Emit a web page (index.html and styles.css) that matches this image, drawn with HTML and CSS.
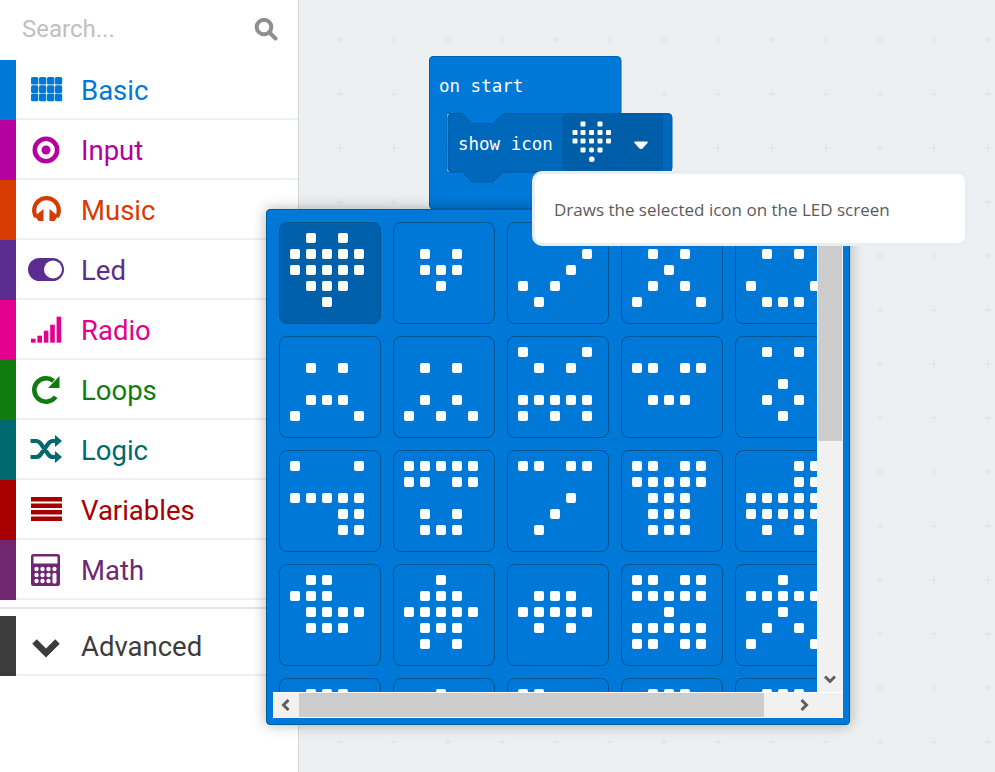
FILE: index.html
```html
<!DOCTYPE html>
<html lang="en">
<head>
    <meta charset="UTF-8">
    <meta name="viewport" content="width=device-width, initial-scale=1.0">
    <title>Show icon</title>
    <link rel="stylesheet" href="styles.css">
</head>
<body>
    <div class="app">
        <aside class="toolbox">
            <div class="search">
                <input class="search-input" type="text" placeholder="Search...">
                <svg class="search-icon" viewBox="0 0 24 24"><circle cx="10" cy="10" r="7.3"/><path d="M15.5 15.5L21.5 21.5"/></svg>
            </div>
            <div class="cat basic">
                <span class="cat-bar"></span>
                <div class="cat-body">
                    <svg class="cat-icon" viewBox="0 0 36 36"><rect x="3" y="6" width="7.3" height="7.6" rx="1.5"/><rect x="11" y="6" width="7.3" height="7.6" rx="1.5"/><rect x="19" y="6" width="7.3" height="7.6" rx="1.5"/><rect x="26.9" y="6" width="7.3" height="7.6" rx="1.5"/><rect x="3" y="14.3" width="7.3" height="7.6" rx="1.5"/><rect x="11" y="14.3" width="7.3" height="7.6" rx="1.5"/><rect x="19" y="14.3" width="7.3" height="7.6" rx="1.5"/><rect x="26.9" y="14.3" width="7.3" height="7.6" rx="1.5"/><rect x="3" y="22.6" width="7.3" height="7.6" rx="1.5"/><rect x="11" y="22.6" width="7.3" height="7.6" rx="1.5"/><rect x="19" y="22.6" width="7.3" height="7.6" rx="1.5"/><rect x="26.9" y="22.6" width="7.3" height="7.6" rx="1.5"/></svg>
                    <span class="cat-name">Basic</span>
                </div>
            </div>
            <div class="cat input">
                <span class="cat-bar"></span>
                <div class="cat-body">
                    <svg class="cat-icon" viewBox="0 0 36 36"><circle class="line" cx="18" cy="19" r="11.2" stroke-width="4.6"/><circle cx="18" cy="19" r="4.5"/></svg>
                    <span class="cat-name">Input</span>
                </div>
            </div>
            <div class="cat music">
                <span class="cat-bar"></span>
                <div class="cat-body">
                    <svg class="cat-icon" viewBox="0 0 36 36"><path class="line" stroke-width="4.2" d="M8.1 26A12.3 12.3 0 1 1 28.9 26"/><path d="M15.5 18V30H10.5L7 25ZM21.5 18V30H26.5L30 25Z"/></svg>
                    <span class="cat-name">Music</span>
                </div>
            </div>
            <div class="cat led">
                <span class="cat-bar"></span>
                <div class="cat-body">
                    <svg class="cat-icon" viewBox="0 0 36 36"><rect x="0" y="7" width="36" height="23" rx="11.5"/><circle class="knob" cx="25" cy="18.5" r="9"/></svg>
                    <span class="cat-name">Led</span>
                </div>
            </div>
            <div class="cat radio">
                <span class="cat-bar"></span>
                <div class="cat-body">
                    <svg class="cat-icon" viewBox="0 0 36 36"><rect x="3" y="27.7" width="4.6" height="4"/><rect x="9.4" y="24.7" width="4.6" height="7"/><rect x="15.8" y="19.7" width="4.6" height="12"/><rect x="22.2" y="13.7" width="4.6" height="18"/><rect x="28.6" y="5.7" width="4.6" height="26"/></svg>
                    <span class="cat-name">Radio</span>
                </div>
            </div>
            <div class="cat loops">
                <span class="cat-bar"></span>
                <div class="cat-body">
                    <svg class="cat-icon" viewBox="0 0 36 36"><path class="line" stroke-width="4.6" d="M27.6 25.7A11.7 11.7 0 1 1 25.5 10"/><path d="M31.5 5V17H20Z"/></svg>
                    <span class="cat-name">Loops</span>
                </div>
            </div>
            <div class="cat logic">
                <span class="cat-bar"></span>
                <div class="cat-body">
                    <svg class="cat-icon" viewBox="0 0 36 36"><path class="line" stroke-width="4.2" d="M2.5 10H8Q11 10 13 13L20 23Q22 26 25 26H28M2.5 26H8Q11 26 13 23L20 13Q22 10 25 10H28"/><path d="M27 4L34 10L27 16ZM27 20L34 26L27 32Z"/></svg>
                    <span class="cat-name">Logic</span>
                </div>
            </div>
            <div class="cat variables">
                <span class="cat-bar"></span>
                <div class="cat-body">
                    <svg class="cat-icon" viewBox="0 0 36 36"><rect x="3" y="6" width="31" height="4.5"/><rect x="3" y="12.5" width="31" height="4.5"/><rect x="3" y="19" width="31" height="4.5"/><rect x="3" y="25.5" width="31" height="4.5"/></svg>
                    <span class="cat-name">Variables</span>
                </div>
            </div>
            <div class="cat math">
                <span class="cat-bar"></span>
                <div class="cat-body">
                    <svg class="cat-icon" viewBox="0 0 36 36"><rect x="3" y="3" width="29" height="32" rx="2.5"/><g class="knob"><rect x="5.5" y="5.5" width="24" height="7"/><circle cx="8.5" cy="18" r="2.2"/><circle cx="14.5" cy="18" r="2.2"/><circle cx="20.5" cy="18" r="2.2"/><circle cx="26.5" cy="18" r="2.2"/><circle cx="8.5" cy="24" r="2.2"/><circle cx="14.5" cy="24" r="2.2"/><circle cx="20.5" cy="24" r="2.2"/><circle cx="8.5" cy="30" r="2.2"/><circle cx="14.5" cy="30" r="2.2"/><circle cx="20.5" cy="30" r="2.2"/><rect x="24.5" y="22" width="4" height="10.5" rx="1.5"/></g></svg>
                    <span class="cat-name">Math</span>
                </div>
            </div>
            <div class="sep"></div>
            <div class="cat advanced">
                <span class="cat-bar"></span>
                <div class="cat-body">
                    <svg class="cat-icon" viewBox="0 0 36 36"><path class="line" stroke-width="6.4" d="M6.5 14.5L18 26L29.5 14.5"/></svg>
                    <span class="cat-name">Advanced</span>
                </div>
            </div>
        </aside>

        <main class="workspace">
            <svg class="canvas" viewBox="299 0 696 772">
                <defs>
                    <pattern id="plus" x="313" y="13" width="54" height="54" patternUnits="userSpaceOnUse">
                        <path d="M23 27H31M27 23V31" stroke="#dfe3e5" stroke-width="1" fill="none"/>
                    </pattern>
                </defs>
                <rect x="299" y="0" width="696" height="772" fill="url(#plus)"/>

                <path class="hat" d="M433 56.5H617Q621 56.5 621 60.5V113.5H503L493 123.5H472L462 113.5H447V172H621V209H433Q429.5 209 429.5 205V60Q429.5 56.5 433 56.5Z"/>
                <text class="block-text" x="439" y="92">on start</text>

                <path class="stmt" d="M452 113.5H462L472 123.5H493L503 113.5H668Q672 113.5 672 117.5V168Q672 172 668 172H503L493 182H472L462 172H452Q448 172 448 168V117.5Q448 113.5 452 113.5Z"/>
                <text class="block-text" x="458" y="150">show icon</text>
                <rect class="field" x="562" y="114" width="101" height="57" rx="4"/>
                <g class="mini">
                    <rect x="580.5" y="121.5" width="5" height="5" rx="1"/><rect x="597.5" y="121.5" width="5" height="5" rx="1"/>
                    <rect x="572.5" y="130" width="5" height="5" rx="1"/><rect x="580.5" y="130" width="5" height="5" rx="1"/><rect x="589" y="130" width="5" height="5" rx="1"/><rect x="597.5" y="130" width="5" height="5" rx="1"/><rect x="606" y="130" width="5" height="5" rx="1"/>
                    <rect x="572.5" y="138.5" width="5" height="5" rx="1"/><rect x="580.5" y="138.5" width="5" height="5" rx="1"/><rect x="589" y="138.5" width="5" height="5" rx="1"/><rect x="597.5" y="138.5" width="5" height="5" rx="1"/><rect x="606" y="138.5" width="5" height="5" rx="1"/>
                    <rect x="580.5" y="147.5" width="5" height="5" rx="1"/><rect x="589" y="147.5" width="5" height="5" rx="2"/><rect x="597.5" y="147.5" width="5" height="5" rx="1"/>
                    <rect x="589" y="156.5" width="5.5" height="5.5" rx="2.5"/>
                    <path d="M635 141.5H647Q648.5 141.5 647.5 143L642.5 148.5Q641 149.5 639.5 148.5L634.5 143Q633.5 141.5 635 141.5Z"/>
                </g>
            </svg>
        </main>

        <div class="picker">
            <div class="picker-scroll">
                <div class="picker-grid" id="pickerGrid"></div>
            </div>
            <div class="bar bar-v">
                <span class="bar-btn"></span>
                <span class="thumb thumb-v"></span>
                <span class="bar-space"></span>
                <span class="bar-btn"><svg class="chev" viewBox="0 0 12 12"><path d="M1 3.5L6 8.5L11 3.5"/></svg></span>
            </div>
            <div class="bar bar-h">
                <span class="bar-btn"><svg class="chev" viewBox="0 0 12 12"><path d="M8.5 1L3.5 6L8.5 11"/></svg></span>
                <span class="thumb thumb-h"></span>
                <span class="bar-space"></span>
                <span class="bar-btn"><svg class="chev" viewBox="0 0 12 12"><path d="M3.5 1L8.5 6L3.5 11"/></svg></span>
            </div>
            <div class="bar-corner"></div>
        </div>

        <div class="tooltip">Draws the selected icon on the LED screen</div>
    </div>
    <script>
        const icons = [
            '.#.#./#####/#####/.###./..#..',
            '...../.#.#./.###./..#../.....',
            '...../....#/...#./#.#../.#...',
            '#...#/.#.#./..#../.#.#./#...#',
            '...../.#.#./...../#...#/.###.',
            '...../.#.#./...../.###./#...#',
            '...../.#.#./...../.#.#./#.#.#',
            '#...#/.#.#./...../#####/#.#.#',
            '...../##.##/...../.###./.....',
            '.#.#./...../..#../.#.#./..#..',
            '#...#/...../#####/...##/...##',
            '#####/##.##/...../.#.#./.###.',
            '##.##/...../...#./..#../.#...',
            '##.##/#####/.###./.###./.###.',
            '...##/...##/#####/#####/.#.#.',
            '.##../###../.####/.###./.....',
            '..#../.###./#####/.###./.#.#.',
            '...../.###./#####/.#.#./.....',
            '##.##/#####/..#../#####/##.##',
            '..#../#####/..#../.#.#./#...#',
            '.###./...../...../...../.....',
            '..#../...../...../...../.....',
            '##.../...../...../...../.....',
            '.###./...../...../...../.....',
            '.###./...../...../...../.....'
        ];

        const grid = document.getElementById('pickerGrid');
        icons.forEach(function(icon, index) {
            const cell = document.createElement('div');
            cell.className = index === 0 ? 'cell selected' : 'cell';
            for (const ch of icon.replaceAll('/', '')) {
                const dot = document.createElement('span');
                dot.className = ch === '#' ? 'dot on' : 'dot';
                cell.appendChild(dot);
            }
            grid.appendChild(cell);
        });
    </script>
</body>
</html>
```

FILE: styles.css
```css
* { box-sizing: border-box; }
html, body { margin: 0; padding: 0; height: 100%; overflow: hidden; }
body { font-family: Roboto, "Liberation Sans", sans-serif; background: #ecf0f1; }
.app { position: relative; display: flex; width: 995px; height: 772px; overflow: hidden; }

/* toolbox */
.toolbox { width: 299px; flex: none; background: #fff; border-right: 1px solid #d4d6d6; }
.search { display: flex; align-items: center; height: 60px; padding: 0 20px 2px 22px; }
.search-input { flex: 1; min-width: 0; border: none; outline: none; padding: 0; background: none; font: 24px Roboto, sans-serif; color: #333; }
.search-input::placeholder { color: #c0c0c0; opacity: 1; }
.search-icon { width: 24px; height: 24px; fill: none; stroke: #8f8f8f; stroke-width: 4; stroke-linecap: round; }

.cat { display: flex; height: 60px; font-size: 27.5px; color: var(--cat); }
.cat-bar { width: 16px; flex: none; background: var(--cat); }
.cat-body { flex: 1; display: flex; align-items: center; border-bottom: 2px solid #edf0f0; }
.cat-icon { width: 36px; height: 36px; flex: none; margin: 0 18px 0 12px; fill: currentColor; }
.cat-icon .line { fill: none; stroke: currentColor; }
.cat-icon .knob { fill: #fff; }
.cat-name { margin: 2px 0 0 -1px; }

.basic { --cat: #0078d7; }
.input { --cat: #b4009e; }
.music { --cat: #d83b01; }
.led { --cat: #5c2d91; }
.radio { --cat: #e3008c; }
.loops { --cat: #107c10; }
.logic { --cat: #006970; }
.variables { --cat: #a80000; }
.math { --cat: #712672; }
.advanced { --cat: #3c3c3c; }
.sep { height: 2px; margin: 7px 0; background: #e6e8e8; }

/* workspace */
.workspace { flex: 1; background: #ecf0f1; }
.canvas { display: block; width: 100%; height: 100%; }
.hat { fill: #0078d7; stroke: #0060ac; stroke-width: 1; }
.stmt { fill: #0068bb; stroke: #005ca3; stroke-width: 1; }
.field { fill: #005ea8; }
.mini { fill: #fff; }
.block-text { font: 17.5px "DejaVu Sans Mono", monospace; fill: #fff; }

/* icon picker */
.picker { position: absolute; left: 266px; top: 209px; width: 584px; height: 516px; display: grid; grid-template-columns: 544px 26px; grid-template-rows: 476px 26px; padding: 6px; background: #0078d7; border: 1px solid #005a9e; border-radius: 4px; box-shadow: 0 0 14px rgba(0, 0, 0, 0.3); }
.picker-scroll { overflow: hidden; padding: 6px; }
.picker-grid { display: grid; grid-template-columns: repeat(5, 102px); grid-auto-rows: 102px; gap: 12px; }
.cell { display: grid; grid-template-columns: repeat(5, 10px); grid-auto-rows: 10px; gap: 6px; padding: 10px; border: 1px solid #00548f; border-radius: 8px; }
.cell.selected { background: #0060ac; }
.dot { border-radius: 2px; }
.dot.on { background: #fff; }

.bar { display: flex; background: #f1f1f1; }
.bar-v { flex-direction: column; }
.bar-h { border-top: 1px solid #fff; border-bottom: 1px solid #fff; }
.bar-corner { background: #f1f1f1; border-top: 1px solid #fff; border-bottom: 1px solid #fff; }
.bar-btn { flex: none; display: flex; align-items: center; justify-content: center; }
.bar-v .bar-btn { height: 26px; }
.bar-h .bar-btn { width: 26px; }
.bar-space { flex: 1; }
.thumb { flex: none; background: #cdcdcd; }
.thumb-v { height: 199px; margin: 0 1px; }
.thumb-h { width: 465px; }
.chev { width: 12px; height: 12px; fill: none; stroke: #5f5f5f; stroke-width: 3; }

/* tooltip */
.tooltip { position: absolute; left: 532px; top: 171px; width: 436px; height: 75px; display: flex; align-items: center; padding: 1px 19px 0; background: #fff; border: 3px solid #e8eef3; border-radius: 10px; font: 17px "Open Sans", sans-serif; color: #5b5b5b; white-space: nowrap; }
```
